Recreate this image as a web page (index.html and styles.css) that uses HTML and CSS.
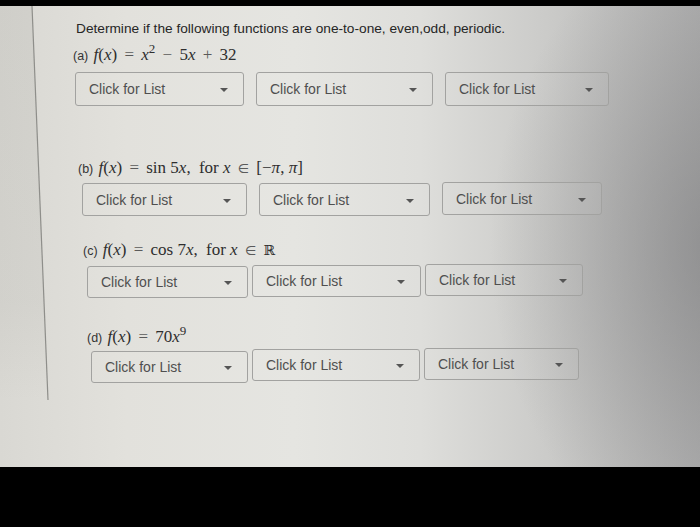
FILE: index.html
```html
<!DOCTYPE html>
<html>
<head>
<meta charset="utf-8">
<link rel="stylesheet" href="styles.css">
</head>
<body>
<div class="screen">
  <svg class="edge" width="700" height="461" viewBox="0 0 700 461">
    <defs>
      <linearGradient id="shade" x1="0" y1="0" x2="0" y2="1">
        <stop offset="0" stop-color="#a8a8a2" stop-opacity="0.2"/>
        <stop offset="0.75" stop-color="#a8a8a2" stop-opacity="0.15"/>
        <stop offset="1" stop-color="#a8a8a2" stop-opacity="0"/>
      </linearGradient>
    </defs>
    <polygon points="0,0 32,0 48,394 0,394" fill="url(#shade)"/>
    <line x1="32" y1="0" x2="48" y2="394" stroke="#8e8e8a" stroke-width="1.2"/>
  </svg>
  <div class="content">
    <p class="title">Determine if the following functions are one-to-one, even,odd, periodic.</p>

    <p class="label label-a"><span class="tag">(a)</span> <i>f</i>(<i>x</i>) <span class="op">=</span> <i>x</i><sup>2</sup> <span class="op">−</span> 5<i>x</i> <span class="op">+</span> 32</p>
    <div class="row row-a">
      <div class="select s1"><span>Click for List</span><span class="caret"></span></div>
      <div class="select s2"><span>Click for List</span><span class="caret"></span></div>
      <div class="select s3"><span>Click for List</span><span class="caret"></span></div>
    </div>

    <p class="label label-b"><span class="tag">(b)</span> <i>f</i>(<i>x</i>) <span class="op">=</span> sin 5<i>x</i>, <span class="for">for</span> <i>x</i> <span class="op el">∈</span> [−<i>π</i>, <i>π</i>]</p>
    <div class="row row-b">
      <div class="select s1"><span>Click for List</span><span class="caret"></span></div>
      <div class="select s2"><span>Click for List</span><span class="caret"></span></div>
      <div class="select s3"><span>Click for List</span><span class="caret"></span></div>
    </div>

    <p class="label label-c"><span class="tag">(c)</span> <i>f</i>(<i>x</i>) <span class="op">=</span> cos 7<i>x</i>, <span class="for">for</span> <i>x</i> <span class="op el">∈</span> <span class="bb">ℝ</span></p>
    <div class="row row-c">
      <div class="select s1"><span>Click for List</span><span class="caret"></span></div>
      <div class="select s2"><span>Click for List</span><span class="caret"></span></div>
      <div class="select s3"><span>Click for List</span><span class="caret"></span></div>
    </div>

    <p class="label label-d"><span class="tag">(d)</span> <i>f</i>(<i>x</i>) <span class="op">=</span> 70<i>x</i><sup>9</sup></p>
    <div class="row row-d">
      <div class="select s1"><span>Click for List</span><span class="caret"></span></div>
      <div class="select s2"><span>Click for List</span><span class="caret"></span></div>
      <div class="select s3"><span>Click for List</span><span class="caret"></span></div>
    </div>
  </div>
</div>
</body>
</html>
```
FILE: styles.css
```css
html, body {
  margin: 0;
  padding: 0;
  background: #000;
  width: 700px;
  height: 527px;
  overflow: hidden;
}

.screen {
  position: relative;
  margin-top: 6px;
  height: 461px;
  background:
    radial-gradient(ellipse 240px 320px at 730px 240px, rgba(110,110,112,0.5), rgba(110,110,112,0) 100%),
    linear-gradient(90deg, #d9d8d3 0%, #e2e1dc 18%, #e5e5e1 42%, #dededb 60%, #cbcbc9 78%, #b0b0b0 100%);
  font-family: "Liberation Sans", Arial, sans-serif;
}

.edge {
  position: absolute;
  left: 0;
  top: 0;
}

.content {
  position: relative;
  padding-top: 14px;
}

.title {
  margin: 0 0 0 76px;
  font-size: 13.7px;
  line-height: 17px;
  color: #262626;
}

.label {
  margin: 0;
  height: 20px;
  line-height: 20px;
  font-family: "Liberation Serif", "Times New Roman", serif;
  font-size: 17px;
  color: #2e2e2e;
  white-space: nowrap;
}

.label i {
  font-style: italic;
}

.label .tag {
  font-family: "Liberation Sans", Arial, sans-serif;
  font-size: 12.5px;
  color: #333;
  margin-right: 1px;
}

.label .op {
  color: #5a5a5a;
  padding: 0 3px;
}

.label .el {
  font-family: "DejaVu Sans", sans-serif;
  font-size: 13px;
}

.label sup {
  font-size: 13px;
  line-height: 0;
  vertical-align: 7px;
}

.label .for {
  padding-left: 4px;
}

.label .bb {
  font-family: "DejaVu Serif", serif;
  font-size: 14px;
}

.label-a { margin-top: 8px; padding-left: 73px; }
.label-b { margin-top: 52px; padding-left: 78px; }
.label-c { margin-top: 24px; padding-left: 83px; }
.label-d { margin-top: 29px; padding-left: 87px; }

.row {
  display: flex;
  align-items: flex-start;
}

.select {
  box-sizing: border-box;
  display: flex;
  align-items: center;
  justify-content: space-between;
  border: 1px solid #a2a2a0;
  border-radius: 3px;
  padding: 0 15px 0 13px;
  font-size: 14px;
  color: #4f4f4f;
  background: rgba(255,255,255,0.04);
}

.caret {
  width: 0;
  height: 0;
  border-left: 4px solid transparent;
  border-right: 4px solid transparent;
  border-top: 4px solid #555;
  margin-top: 2px;
}

.row-a { margin-top: 7px; padding-left: 75px; gap: 12px; }
.row-a .select { height: 34px; }
.row-a .s1 { width: 169px; }
.row-a .s2 { width: 177px; }
.row-a .s3 { width: 164px; }

.row-b { margin-top: 5px; padding-left: 82px; gap: 12px; }
.row-b .select { height: 33px; }
.row-b .s1 { width: 165px; }
.row-b .s2 { width: 171px; }
.row-b .s3 { width: 160px; margin-top: -1px; }

.row-c { margin-top: 6px; padding-left: 87px; gap: 4px; }
.row-c .select { height: 32px; }
.row-c .s1 { width: 161px; }
.row-c .s2 { width: 169px; margin-top: -1px; }
.row-c .s3 { width: 158px; margin-top: -2px; }

.row-d { margin-top: 4px; padding-left: 91px; gap: 4px; }
.row-d .select { height: 32px; }
.row-d .s1 { width: 157px; }
.row-d .s2 { width: 168px; margin-top: -2px; }
.row-d .s3 { width: 155px; margin-top: -3px; }
```
